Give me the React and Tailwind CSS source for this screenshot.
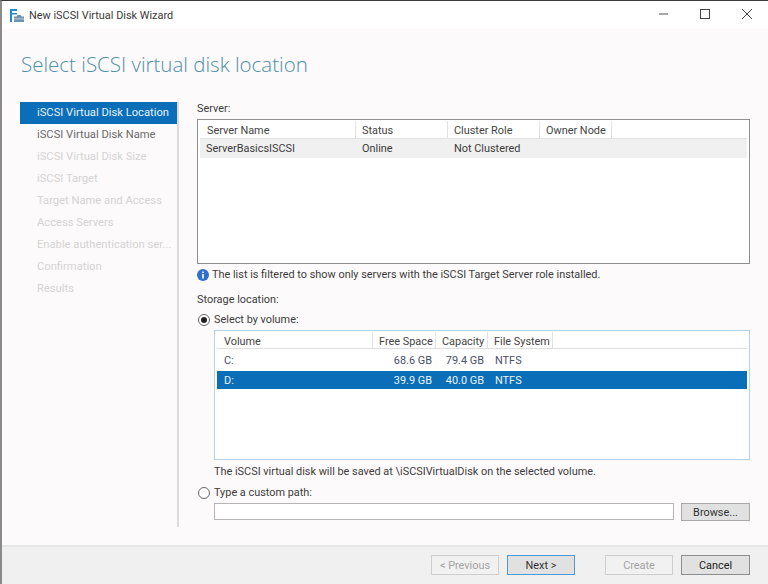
import React from "react";

const steps = [
  ["iSCSI Virtual Disk Location", "active"],
  ["iSCSI Virtual Disk Name", "normal"],
  ["iSCSI Virtual Disk Size", "off"],
  ["iSCSI Target", "off"],
  ["Target Name and Access", "off"],
  ["Access Servers", "off"],
  ["Enable authentication ser...", "off"],
  ["Confirmation", "off"],
  ["Results", "off"],
];

function Step({ label, state }) {
  const cls =
    state === "active"
      ? "bg-[#0a6fb8] text-[#e4eff7]"
      : state === "normal"
      ? "text-[#6b6b6b]"
      : "text-[#d4d4d4]";
  return <div className={`h-[22px] pl-[17px] text-[11.2px] leading-[22px] whitespace-nowrap ${cls}`}>{label}</div>;
}

function Head({ w, children, right }) {
  return (
    <div
      className={`h-full shrink-0 px-[6px] leading-[19px] text-[#444] border-r border-[#e2e2e2] whitespace-nowrap ${right ? "text-right" : ""}`}
      style={{ width: w }}
    >
      {children}
    </div>
  );
}

function Btn({ children, kind = "normal", wide }) {
  const cls = {
    normal: "border-[#a9a9a9] bg-[#e1e1e1] text-[#333]",
    primary: "border-[#4a9ad8] bg-[#e1e1e1] text-[#333]",
    off: "border-[#cfcfcf] bg-[#f1f1f1] text-[#a3a3a3]",
    cancel: "border-[#8d8d8d] bg-[#e1e1e1] text-[#222]",
  }[kind];
  return (
    <div className={`flex h-[20px] ${wide ? "w-[69px]" : "w-[68px]"} items-center justify-center border pt-[2px] ${cls}`}>
      {children}
    </div>
  );
}

function Radio({ checked }) {
  return (
    <div className="flex h-[12px] w-[12px] shrink-0 items-center justify-center rounded-full border border-[#666] bg-white">
      {checked && <div className="h-[6px] w-[6px] rounded-full bg-[#222]" />}
    </div>
  );
}

export default function App() {
  return (
    <div
      className="flex h-[584px] w-[768px] flex-col overflow-hidden border-t border-l-2 border-t-[#3a3a3a] border-l-[#8a8a8a] bg-white text-[10.9px] text-[#3c3c3c]"
      style={{ fontFamily: 'Roboto, "Open Sans", sans-serif' }}
    >
      {/* title bar */}
      <div className="flex h-[28px] shrink-0 items-center bg-white">
        <svg className="ml-[8px] h-[13px] w-[14px]" viewBox="0 0 14 13">
          <path d="M0 0h7v2H2v2h5v1.5H2V13H0z" fill="#1f8bd0" />
          <path d="M4 7.5h2.5L7.5 6h3l1 1.5H14V13H4z" fill="#6d93ad" />
          <path d="M4 9.5h10v.8H4z" fill="#d7e3ec" />
        </svg>
        <div className="ml-[5px] pt-[2px] text-[#3a3a3a]">New iSCSI Virtual Disk Wizard</div>
        <div className="ml-auto flex items-center pb-[2px]">
          <svg className="h-[10px] w-[10px]" viewBox="0 0 10 10">
            <path d="M0 5h9" stroke="#555" strokeWidth="1" />
          </svg>
          <svg className="ml-[31px] h-[10px] w-[10px]" viewBox="0 0 10 10">
            <rect x="0.5" y="0.5" width="9" height="9" fill="none" stroke="#444" />
          </svg>
          <svg className="ml-[32px] mr-[16px] h-[10px] w-[10px]" viewBox="0 0 10 10">
            <path d="M0 0l10 10M10 0L0 10" stroke="#444" strokeWidth="1" />
          </svg>
        </div>
      </div>

      {/* body */}
      <div className="flex min-h-0 flex-1 flex-col bg-[#fcfafb]">
        <div
          className="ml-[19px] mt-[18px] h-[34px] text-[20.5px] font-light leading-[34px] text-[#4f8fa8]"
          style={{ fontFamily: '"Open Sans", sans-serif' }}
        >
          Select iSCSI virtual disk location
        </div>

        <div className="mt-[21px] flex min-h-0 flex-1">
          <div className="ml-[18px] h-[425px] w-[159px] shrink-0 border-r-2 border-[#dcdcdc]">
            {steps.map(([l, s]) => (
              <Step key={l} label={l} state={s} />
            ))}
          </div>

          <div className="ml-[18px] w-[553px] shrink-0">
            <div className="h-[17px] leading-[13px]">Server:</div>
            <div className="h-[145px] border border-[#8f8f8f] bg-white px-[2px] pt-[1px]">
              <div className="flex h-[18px] border-b border-[#e2e2e2] pl-[1px]">
                <Head w={155}>Server Name</Head>
                <Head w={92}>Status</Head>
                <Head w={92}>Cluster Role</Head>
                <Head w={72}>Owner Node</Head>
              </div>
              <div className="flex h-[19px] items-center bg-[#f0f0f0] pl-[6px] pt-[2px]">
                <div className="w-[156px]">ServerBasicsISCSI</div>
                <div className="w-[92px]">Online</div>
                <div>Not Clustered</div>
              </div>
            </div>

            <div className="mt-[4px] flex h-[14px] items-center">
              <svg className="h-[12px] w-[12px] shrink-0" viewBox="0 0 12 12">
                <circle cx="6" cy="6" r="6" fill="#2f6fd0" />
                <rect x="5.2" y="5" width="1.6" height="4.5" fill="#fff" />
                <rect x="5.2" y="2.5" width="1.6" height="1.6" fill="#fff" />
              </svg>
              <div className="ml-[3px] whitespace-nowrap">
                The list is filtered to show only servers with the iSCSI Target Server role installed.
              </div>
            </div>

            <div className="mt-[11px] h-[14px] leading-[14px]">Storage location:</div>
            <div className="mt-[6px] flex h-[14px] items-center gap-[4px] pl-[1px]">
              <Radio checked />
              <div>Select by volume:</div>
            </div>

            <div className="ml-[17px] mt-[3px] h-[130px] w-[536px] border border-[#b6d0e6] bg-white px-[2px] pt-[1px]">
              <div className="flex h-[17px] border-b border-[#dedede] pl-[1px]">
                <Head w={155}>Volume</Head>
                <Head w={63} right>Free Space</Head>
                <Head w={52} right>Capacity</Head>
                <Head w={65}>File System</Head>
              </div>
              <div className="mt-[1px] flex h-[20px] items-center pt-[2px] text-[#4a4f6a]">
                <div className="w-[158px] pl-[7px]">C:</div>
                <div className="w-[63px] pr-[6px] text-right">68.6 GB</div>
                <div className="w-[52px] pr-[6px] text-right">79.4 GB</div>
                <div className="pl-[5px]">NTFS</div>
              </div>
              <div className="mt-[1px] flex h-[18px] items-center bg-[#0a6fb8] pt-[2px] text-[#eaf3fa]">
                <div className="w-[158px] pl-[7px]">D:</div>
                <div className="w-[63px] pr-[6px] text-right">39.9 GB</div>
                <div className="w-[52px] pr-[6px] text-right">40.0 GB</div>
                <div className="pl-[5px]">NTFS</div>
              </div>
            </div>

            <div className="ml-[17px] mt-[5px] h-[14px] whitespace-nowrap leading-[14px]">
              The iSCSI virtual disk will be saved at \iSCSIVirtualDisk on the selected volume.
            </div>
            <div className="mt-[7px] flex h-[14px] items-center gap-[4px] pl-[1px]">
              <Radio />
              <div>Type a custom path:</div>
            </div>
            <div className="ml-[17px] mt-[3px] flex gap-[7px]">
              <div className="h-[17px] w-[460px] border border-[#b4b4b4] bg-white" />
              <div className="flex h-[18px] w-[69px] items-center justify-center border border-[#a9a9a9] bg-[#e1e1e1] pt-[2px] text-[#333]">
                Browse...
              </div>
            </div>
          </div>
        </div>
      </div>

      {/* footer */}
      <div className="flex h-[39px] shrink-0 items-start border-t-2 border-[#e6e6e6] bg-[#f0f0f0] pl-[429px] pt-[8px]">
        <Btn kind="off">&lt; Previous</Btn>
        <div className="ml-[8px]">
          <Btn kind="primary">Next &gt;</Btn>
        </div>
        <div className="ml-[30px]">
          <Btn kind="off">Create</Btn>
        </div>
        <div className="ml-[8px]">
          <Btn kind="cancel" wide>Cancel</Btn>
        </div>
      </div>
    </div>
  );
}
